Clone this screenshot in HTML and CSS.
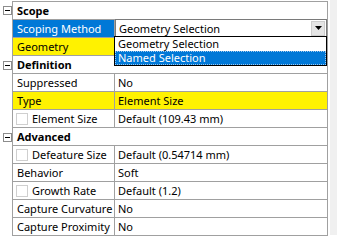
FILE: index.html
```html
<!DOCTYPE html>
<html>
<head>
<meta charset="utf-8">
<link rel="stylesheet" href="styles.css">
</head>
<body>
<div class="frame">
  <div class="grid">
    <div class="row first">
      <div class="gut"><span class="tog"></span></div>
      <div class="cells head">Scope</div>
    </div>
    <div class="row">
      <div class="gut"></div>
      <div class="cells">
        <div class="label sel">Scoping Method</div>
        <div class="value">
          <div class="combo">
            <span class="combo-text">Geometry Selection</span>
            <span class="combo-btn"><svg width="7" height="4" viewBox="0 0 7 4"><path d="M0 0H7L3.5 4Z" fill="#000"/></svg></span>
          </div>
          <div class="droplist">
            <div class="opt">Geometry Selection</div>
            <div class="opt on">Named Selection</div>
          </div>
        </div>
      </div>
    </div>
    <div class="row">
      <div class="gut"></div>
      <div class="cells">
        <div class="label req">Geometry</div>
        <div class="value req"></div>
      </div>
    </div>
    <div class="row">
      <div class="gut"><span class="tog"></span></div>
      <div class="cells head">Definition</div>
    </div>
    <div class="row">
      <div class="gut"></div>
      <div class="cells"><div class="label">Suppressed</div><div class="value">No</div></div>
    </div>
    <div class="row">
      <div class="gut"></div>
      <div class="cells req"><div class="label">Type</div><div class="value">Element Size</div></div>
    </div>
    <div class="row">
      <div class="gut"></div>
      <div class="cells"><div class="label chk"><span class="box"></span>Element Size</div><div class="value">Default (109.43 mm)</div></div>
    </div>
    <div class="row">
      <div class="gut"><span class="tog"></span></div>
      <div class="cells head">Advanced</div>
    </div>
    <div class="row">
      <div class="gut"></div>
      <div class="cells"><div class="label chk"><span class="box"></span>Defeature Size</div><div class="value">Default (0.54714 mm)</div></div>
    </div>
    <div class="row">
      <div class="gut"></div>
      <div class="cells"><div class="label">Behavior</div><div class="value">Soft</div></div>
    </div>
    <div class="row">
      <div class="gut"></div>
      <div class="cells"><div class="label chk"><span class="box"></span>Growth Rate</div><div class="value">Default (1.2)</div></div>
    </div>
    <div class="row">
      <div class="gut"></div>
      <div class="cells"><div class="label">Capture Curvature</div><div class="value">No</div></div>
    </div>
    <div class="row">
      <div class="gut"></div>
      <div class="cells"><div class="label">Capture Proximity</div><div class="value">No</div></div>
    </div>
  </div>
  <div class="strip"></div>
</div>
</body>
</html>
```
FILE: styles.css
```css
html, body {
  margin: 0;
  padding: 0;
  background: #ffffff;
}
body {
  font-family: "Noto Sans", "Open Sans", sans-serif;
  font-size: 11px;
  color: #000;
}
.frame {
  display: flex;
  width: 337px;
  height: 243px;
}
.grid {
  width: 330px;
  padding-top: 1px;
  display: flex;
  flex-direction: column;
}
.strip {
  width: 7px;
  height: 235px;
  background: #f0f0f0;
}
.row {
  display: flex;
  height: 18px;
}
.row.first {
  height: 19px;
}
.row.first .cells {
  border-top: 1px solid #a0a0a0;
}
.gut {
  width: 12px;
  display: flex;
  align-items: center;
  justify-content: flex-start;
  padding-left: 3px;
  box-sizing: border-box;
}
.tog {
  width: 9px;
  height: 9px;
  box-sizing: border-box;
  border: 1px solid #8c8c8c;
  background: #fff;
  display: flex;
  align-items: center;
  justify-content: center;
}
.tog::before {
  content: "";
  width: 5px;
  height: 1px;
  background: #000;
}
.cells {
  width: 316px;
  display: flex;
  box-sizing: border-box;
  border-left: 1px solid #a0a0a0;
  border-right: 1px solid #a0a0a0;
  border-bottom: 1px solid #a0a0a0;
}
.cells.head {
  font-weight: bold;
  align-items: center;
  padding-left: 4px;
}
.label {
  width: 102px;
  box-sizing: border-box;
  border-right: 1px solid #a0a0a0;
  padding-left: 4px;
  display: flex;
  align-items: center;
  white-space: nowrap;
  overflow: hidden;
}
.value {
  flex: 1;
  padding-left: 3px;
  display: flex;
  align-items: center;
  position: relative;
  white-space: nowrap;
}
.sel {
  background: #0078d7;
  color: #fff;
}
.req {
  background: #fff200;
}
.chk .box {
  width: 12px;
  height: 12px;
  box-sizing: border-box;
  border: 1px solid #cfcfcf;
  background: #fff;
  margin-right: 4px;
  margin-left: -1px;
  flex: none;
}
.combo {
  position: absolute;
  left: 0;
  top: -1px;
  right: 0;
  bottom: 0;
  border: 1px solid #7a7a7a;
  background: #fff;
  display: flex;
  align-items: center;
  padding-left: 3px;
}
.combo-text {
  flex: 1;
}
.combo-btn {
  width: 12px;
  height: 13px;
  margin-right: 1px;
  background: #e5e5e5;
  border: 1px solid #cdcdcd;
  display: flex;
  align-items: center;
  justify-content: center;
}
.droplist {
  position: absolute;
  left: -1px;
  top: 16px;
  width: 213px;
  box-sizing: border-box;
  border: 1px solid #000;
  background: #fff;
  z-index: 5;
}
.opt {
  height: 14px;
  line-height: 14px;
  padding-left: 3px;
  box-sizing: border-box;
}
.opt.on {
  background: #0078d7;
  color: #fff;
  outline: 1px dotted #9fc9ef;
  outline-offset: -1px;
}
```
